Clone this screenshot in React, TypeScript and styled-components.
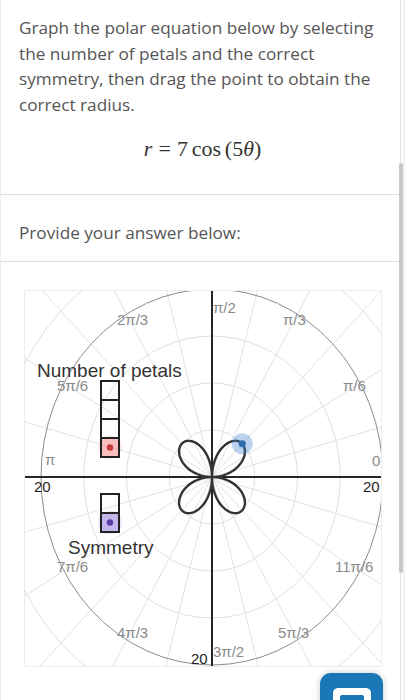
import React from "react";
import styled, { createGlobalStyle } from "styled-components";

const GlobalStyle = createGlobalStyle`
  html, body { margin: 0; padding: 0; background: #ffffff; }
  body { font-family: "Open Sans", "Liberation Sans", sans-serif; overflow: hidden; }
  * { box-sizing: border-box; }
`;

const Page = styled.div`
  position: relative;
  width: 407px;
  height: 700px;
  overflow: hidden;
  background: #ffffff;
`;

const Card = styled.div`
  width: 401px;
  height: 700px;
  border-left: 1px solid #ececec;
  border-right: 1px solid #e2e2e2;
  display: flex;
  flex-direction: column;
`;

const Section = styled.section<{ $pt: number; $pb: number; $pl?: number }>`
  padding: ${(p) => p.$pt}px 20px ${(p) => p.$pb}px ${(p) => p.$pl ?? 18}px;
  border-bottom: 1px solid #dedede;
`;

const GraphSection = styled.section`
  padding: 28px 0 0 23px;
`;

const Prompt = styled.p`
  margin: 0;
  font-size: 17.2px;
  line-height: 25.6px;
  color: #555555;
`;

const Equation = styled.div`
  margin-top: 17px;
  padding-left: 6px;
  text-align: center;
  font-family: "Liberation Serif", "Times New Roman", serif;
  font-size: 22px;
  line-height: 30px;
  color: #333333;
`;

const Var = styled.span`
  font-style: italic;
`;

const Op = styled.span`
  margin: 0 0.28em;
`;

const Fn = styled.span`
  margin: 0 0.17em;
`;

const GraphFrame = styled.div`
  width: 358px;
  height: 377px;
  border: 1px solid #ececec;
  background: #ffffff;
`;

const ScrollThumb = styled.div`
  position: absolute;
  left: 399px;
  top: 163px;
  width: 4px;
  height: 410px;
  border-radius: 2px;
  background: #c9c9c9;
`;

const ScrollTrack = styled.div`
  position: absolute;
  left: 403px;
  top: 0;
  width: 2px;
  height: 700px;
  background: #f1f1f1;
`;

const FloatButton = styled.button`
  position: absolute;
  left: 320px;
  top: 673px;
  width: 63px;
  height: 58px;
  padding: 0;
  border: none;
  border-radius: 11px;
  background: #1a78b6;
  box-shadow: 0 0 6px rgba(0, 0, 0, 0.22);
  display: flex;
  justify-content: center;
  align-items: flex-start;
  padding-top: 15px;
`;

const CX = 187;
const CY = 186;
const SX = 8.55;
const SY = 9.4;
const W = 356;
const H = 375;

const toXY = (r: number, t: number) => [CX + r * Math.cos(t) * SX, CY - r * Math.sin(t) * SY];

const rosePath = (() => {
  const pts: string[] = [];
  const n = 400;
  for (let i = 0; i <= n; i++) {
    const t = (i / n) * Math.PI * 2;
    const r = 5 * Math.sin(2 * t);
    const [x, y] = toXY(r, t);
    pts.push(`${i === 0 ? "M" : "L"}${x.toFixed(2)},${y.toFixed(2)}`);
  }
  return pts.join(" ") + " Z";
})();

type Label = { t: string; x: number; y: number; dark?: boolean };

const labels: Label[] = [
  { t: "π/2", x: 189, y: 23 },
  { t: "2π/3", x: 93, y: 35 },
  { t: "π/3", x: 259, y: 35 },
  { t: "5π/6", x: 33, y: 101 },
  { t: "π/6", x: 319, y: 101 },
  { t: "π", x: 21, y: 175 },
  { t: "0", x: 348, y: 176 },
  { t: "20", x: 10, y: 202, dark: true },
  { t: "20", x: 339, y: 202, dark: true },
  { t: "7π/6", x: 33, y: 282 },
  { t: "11π/6", x: 311, y: 282 },
  { t: "4π/3", x: 93, y: 348 },
  { t: "5π/3", x: 254, y: 348 },
  { t: "3π/2", x: 189, y: 367 },
  { t: "20", x: 167, y: 374, dark: true },
];

const PolarGraph: React.FC = () => {
  const rings = [5, 10, 15, 25, 30, 35];
  const spokes = Array.from({ length: 24 }, (_, k) => (k * Math.PI) / 12);
  const [px, py] = toXY(5, Math.PI / 4);
  const font = '"Liberation Sans", Arial, sans-serif';
  return (
    <svg width={W} height={H} viewBox={`0 0 ${W} ${H}`}>
      <defs>
        <clipPath id="plot">
          <rect x={0} y={0} width={W} height={H} />
        </clipPath>
      </defs>
      <g clipPath="url(#plot)">
        {spokes.map((t, i) => {
          const [x, y] = toXY(45, t);
          return <line key={i} x1={CX} y1={CY} x2={x} y2={y} stroke="#e2e2e2" strokeWidth={1} />;
        })}
        {rings.map((r) => (
          <ellipse key={r} cx={CX} cy={CY} rx={r * SX} ry={r * SY} fill="none" stroke="#e0e0e0" strokeWidth={1} />
        ))}
        <ellipse cx={CX} cy={CY} rx={20 * SX} ry={20 * SY} fill="none" stroke="#8c8c8c" strokeWidth={1} />
        <line x1={0} y1={CY} x2={W} y2={CY} stroke="#262626" strokeWidth={2} />
        <line x1={CX} y1={0} x2={CX} y2={H} stroke="#262626" strokeWidth={2} />
        <g transform="translate(-1,-1)" fontFamily={font} fontSize={15}>
          {labels.map((l, i) => (
            <text key={i} x={l.x} y={l.y} fill={l.dark ? "#1e1e1e" : "#8a8a8a"}>
              {l.t}
            </text>
          ))}
        </g>
        <path d={rosePath} fill="none" stroke="#333333" strokeWidth={2.4} strokeLinejoin="round" />
        <circle cx={px} cy={py} r={10.5} fill="rgba(60,130,210,0.35)" />
        <circle cx={px} cy={py} r={3.6} fill="#2c6db0" />

        <g transform="translate(-1,-1)">
          <text x={13} y={87} fontFamily={font} fontSize={19} fill="#333333">
            Number of petals
          </text>
          <circle cx={86} cy={157.5} r={12} fill="rgba(235,90,90,0.12)" />
          <rect x={77} y={148} width={18} height={19} fill="rgba(240,110,110,0.35)" />
          {[0, 1, 2, 3].map((i) => (
            <rect key={i} x={77} y={91 + i * 19} width={18} height={19} fill="none" stroke="#222222" strokeWidth={2} />
          ))}
          <circle cx={86} cy={157.5} r={3.2} fill="#c0393b" />

          <circle cx={86} cy={232.5} r={12} fill="rgba(120,90,210,0.12)" />
          <rect x={77} y={223} width={18} height={19} fill="rgba(125,95,215,0.38)" />
          {[0, 1].map((i) => (
            <rect key={i} x={77} y={204 + i * 19} width={18} height={19} fill="none" stroke="#222222" strokeWidth={2} />
          ))}
          <circle cx={86} cy={232.5} r={3.2} fill="#5b3fa6" />
          <text x={44} y={264} fontFamily={font} fontSize={19} fill="#333333">
            Symmetry
          </text>
        </g>
      </g>
    </svg>
  );
};

const ButtonIcon: React.FC = () => (
  <svg width={38} height={44} viewBox="0 0 38 44">
    <rect x={0} y={0} width={38} height={44} rx={5} fill="#ffffff" />
    <rect x={7} y={7} width={24} height={37} rx={2} fill="#1a78b6" />
  </svg>
);

export default function App() {
  return (
    <Page>
      <GlobalStyle />
      <Card>
        <Section $pt={15} $pb={30}>
          <Prompt>
            Graph the polar equation below by selecting the number of petals and the correct symmetry, then drag the
            point to obtain the correct radius.
          </Prompt>
          <Equation>
            <Var>r</Var>
            <Op>=</Op>7<Fn>cos</Fn>(5<Var>θ</Var>)
          </Equation>
        </Section>
        <Section $pt={25} $pb={15}>
          <Prompt>Provide your answer below:</Prompt>
        </Section>
        <GraphSection>
          <GraphFrame>
            <PolarGraph />
          </GraphFrame>
        </GraphSection>
      </Card>
      <ScrollTrack />
      <ScrollThumb />
      <FloatButton aria-label="Calculator">
        <ButtonIcon />
      </FloatButton>
    </Page>
  );
}
